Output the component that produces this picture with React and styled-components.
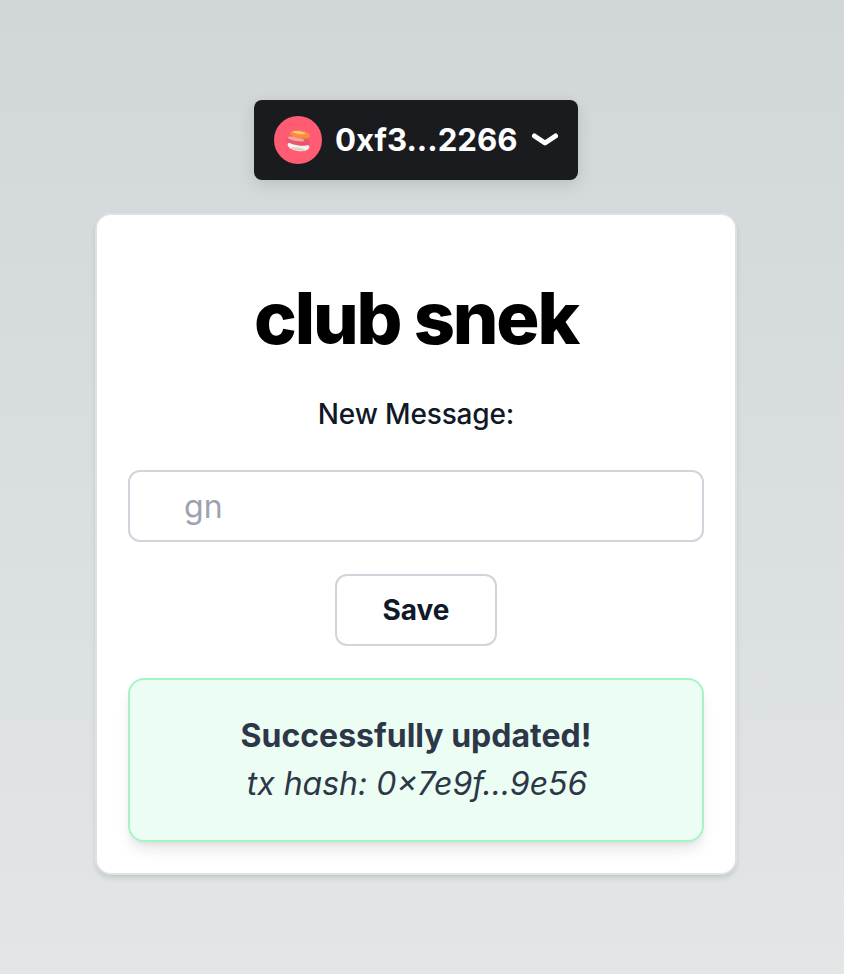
import React from 'react';
import styled, { createGlobalStyle } from 'styled-components';

const GlobalStyle = createGlobalStyle`
  * {
    box-sizing: border-box;
  }

  body {
    margin: 0;
    font-family: Inter, "Liberation Sans", sans-serif;
  }
`;

const Page = styled.div`
  min-height: 974px;
  padding: 100px 12px 0 0;
  display: flex;
  flex-direction: column;
  align-items: center;
  gap: 33px;
  background: linear-gradient(180deg, #d1d6d8 0%, #e2e6e7 100%);
`;

const WalletButton = styled.button`
  width: 324px;
  height: 80px;
  padding: 0 0 0 20px;
  display: flex;
  align-items: center;
  gap: 13px;
  border: none;
  border-radius: 8px;
  background: #1a1b1f;
  color: #fff;
  font-family: inherit;
  font-size: 31.2px;
  font-weight: 700;
  box-shadow: 0 4px 16px rgba(0, 0, 0, 0.12);
`;

const Avatar = styled.span`
  width: 48px;
  height: 48px;
  flex: none;
  border-radius: 50%;
  background: #ff5c74;
  display: flex;
  align-items: center;
  justify-content: center;
`;

const ChevronIcon = styled.svg`
  width: 28px;
  height: 14px;
  flex: none;
`;

const Card = styled.main`
  width: 642px;
  padding: 31px;
  display: flex;
  flex-direction: column;
  align-items: center;
  background: #fff;
  border: 2px solid #dfe2e5;
  border-radius: 16px;
  box-shadow: 0 4px 6px -1px rgba(0, 0, 0, 0.1), 0 2px 4px -1px rgba(0, 0, 0, 0.06);
`;

const Title = styled.h1`
  margin: 32px 0 0;
  font-size: 72px;
  line-height: 80px;
  font-weight: 800;
  letter-spacing: -2.2px;
  color: #000;
`;

const Label = styled.label`
  margin-top: 38px;
  font-size: 28px;
  line-height: 36px;
  font-weight: 500;
  letter-spacing: -0.15px;
  color: #111827;
`;

const MessageInput = styled.input`
  width: 100%;
  height: 72px;
  margin-top: 38px;
  padding: 0 54px;
  border: 2px solid #d1d5db;
  border-radius: 12px;
  font-family: inherit;
  font-size: 32px;
  color: #111827;
  outline: none;

  &::placeholder {
    color: #9ca3af;
    opacity: 1;
  }
`;

const SaveButton = styled.button`
  width: 162px;
  height: 72px;
  margin-top: 32px;
  border: 2px solid #d1d5db;
  border-radius: 12px;
  background: #fff;
  font-family: inherit;
  font-size: 28px;
  font-weight: 700;
  color: #111827;
`;

const Alert = styled.div`
  width: 100%;
  height: 164px;
  margin-top: 32px;
  display: flex;
  flex-direction: column;
  align-items: center;
  justify-content: center;
  border: 2px solid #a7f3c5;
  border-radius: 16px;
  background: #ecfdf3;
  color: #2d3748;
  font-size: 32px;
  line-height: 48px;
  box-shadow: 0 10px 15px -3px rgba(0, 0, 0, 0.1), 0 4px 6px -2px rgba(0, 0, 0, 0.05);
`;

const AlertTitle = styled.strong`
  font-weight: 700;
`;

const AlertHash = styled.em`
  font-style: italic;
  padding-left: 2px;
`;

function SushiIcon() {
  return (
    <svg width="26" height="23" viewBox="0 0 26 23" aria-hidden="true">
      <ellipse cx="13.5" cy="17" rx="11" ry="5" fill="#f7f3ee" transform="rotate(8 13.5 17)" />
      <ellipse cx="13" cy="20" rx="7" ry="1.4" fill="#d8d2ca" transform="rotate(8 13 20)" />
      <ellipse cx="13" cy="12" rx="12.5" ry="4.4" fill="#e8566c" transform="rotate(10 13 12)" />
      <ellipse cx="11" cy="10" rx="8.5" ry="2" fill="#f8a3ab" transform="rotate(10 11 10)" />
      <ellipse cx="15" cy="5.5" rx="10" ry="4" fill="#f78f35" transform="rotate(8 15 5.5)" />
      <ellipse cx="14" cy="3.6" rx="6.5" ry="1.4" fill="#fcc48a" transform="rotate(8 14 3.6)" />
    </svg>
  );
}

function Chevron() {
  return (
    <ChevronIcon viewBox="0 0 28 14" fill="none" aria-hidden="true">
      <path d="M3.5 3 L14 10 L24.5 3" stroke="#fff" strokeWidth="5" strokeLinecap="round" strokeLinejoin="round" />
    </ChevronIcon>
  );
}

export default function App() {
  return (
    <>
      <GlobalStyle />
      <Page>
        <WalletButton>
          <Avatar>
            <SushiIcon />
          </Avatar>
          0xf3...2266
          <Chevron />
        </WalletButton>
        <Card>
          <Title>club snek</Title>
          <Label htmlFor="message">New Message:</Label>
          <MessageInput id="message" placeholder="gn" />
          <SaveButton>Save</SaveButton>
          <Alert>
            <AlertTitle>Successfully updated!</AlertTitle>
            <AlertHash>tx hash: 0×7e9f...9e56</AlertHash>
          </Alert>
        </Card>
      </Page>
    </>
  );
}
